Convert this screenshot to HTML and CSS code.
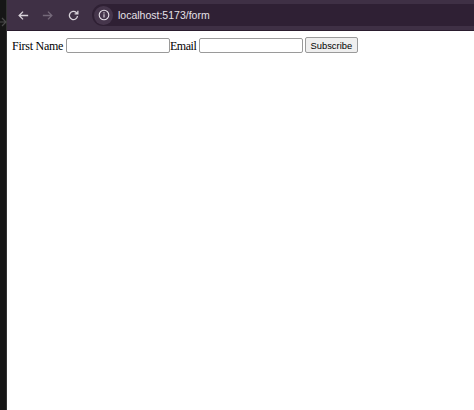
FILE: index.html
```html
<!DOCTYPE html>
<html lang="en">
<head>
    <meta charset="UTF-8">
    <title>Form</title>
    <link rel="stylesheet" href="styles.css">
</head>
<body>
    <div class="side-strip">
        <svg class="strip-arrow" width="8" height="12" viewBox="0 0 8 12"><path d="M0 6h7M3 2l4 4-4 4" fill="none" stroke="#4a4a4a" stroke-width="1.2"/></svg>
    </div>
    <div class="window">
        <div class="toolbar">
            <svg class="nav-icon" width="13" height="13" viewBox="0 0 14 14"><path d="M12 7H2.500M6.500 2.800L2.300 7l4.200 4.200" fill="none" stroke="#d8d2da" stroke-width="1.400"/></svg>
            <svg class="nav-icon" width="13" height="13" viewBox="0 0 14 14"><path d="M2 7h9.500M7.500 2.800L11.700 7l-4.200 4.200" fill="none" stroke="#75697a" stroke-width="1.400"/></svg>
            <svg class="nav-icon reload" width="13" height="13" viewBox="0 0 14 14"><path d="M11.300 7.500A4.400 4.400 0 1 1 10 3.800L11.500 5M11.700 1.800V5.300H8.200" fill="none" stroke="#d8d2da" stroke-width="1.400"/></svg>
            <div class="address">
                <span class="info-badge">
                    <svg width="12" height="12" viewBox="0 0 12 12"><circle cx="6" cy="6" r="4.800" fill="none" stroke="#e6e1e8" stroke-width="1.100"/><path d="M6 5.300v3.200M6 3.300v1.100" stroke="#e6e1e8" stroke-width="1.100"/></svg>
                </span>
                <span class="url">localhost:5173/form</span>
            </div>
        </div>
        <form class="page">
            <label>First Name</label> <input type="text"><label class="email-label">Email</label> <input type="text"> <button type="button">Subscribe</button>
        </form>
    </div>
</body>
</html>
```
FILE: styles.css
```css
* {
    box-sizing: border-box;
}

html, body {
    height: 100%;
}

body {
    margin: 0;
    display: flex;
    overflow: hidden;
    background: white;
}

.side-strip {
    width: 7px;
    background-color: #161616;
    border-right: 1px solid #333;
    padding-top: 16px;
    flex-shrink: 0;
}

.strip-arrow {
    display: block;
    margin-left: -1px;
}

.window {
    flex: 1;
    min-width: 0;
}

.toolbar {
    height: 31px;
    background-color: #3f3045;
    border-bottom: 1px solid #2a1c2e;
    display: flex;
    align-items: center;
    padding-left: 10px;
    gap: 11px;
}

.nav-icon {
    flex-shrink: 0;
}

.reload {
    margin-left: 2px;
}

.address {
    flex: 1;
    height: 22px;
    margin-left: 1px;
    border-radius: 11px 0 0 11px;
    background-color: #2f2034;
    display: flex;
    align-items: center;
    padding-left: 2px;
    gap: 5px;
}

.info-badge {
    width: 19px;
    height: 19px;
    border-radius: 50%;
    background-color: #46364c;
    display: flex;
    align-items: center;
    justify-content: center;
}

.url {
    color: #e6e1e8;
    font-family: "Liberation Sans", sans-serif;
    font-size: 10.500px;
}

.page {
    padding: 6px 5px;
    font-family: "Liberation Serif", serif;
    font-size: 12px;
    letter-spacing: -0.25px;
    color: black;
    white-space: nowrap;
}

.email-label {
    letter-spacing: -0.45px;
}

.page input {
    width: 104px;
    height: 15px;
    padding: 1px 2px;
    border: 1px solid #9a9a9a;
    border-radius: 2px;
    background: white;
    vertical-align: baseline;
}

.page button {
    height: 16px;
    width: 53px;
    margin-left: -1px;
    padding: 0;
    vertical-align: 1px;
    font-family: "Liberation Sans", sans-serif;
    font-size: 9.400px;
    letter-spacing: 0;
    color: black;
    background-color: #efefef;
    border: 1px solid #9a9a9a;
    border-radius: 2px;
}
```
